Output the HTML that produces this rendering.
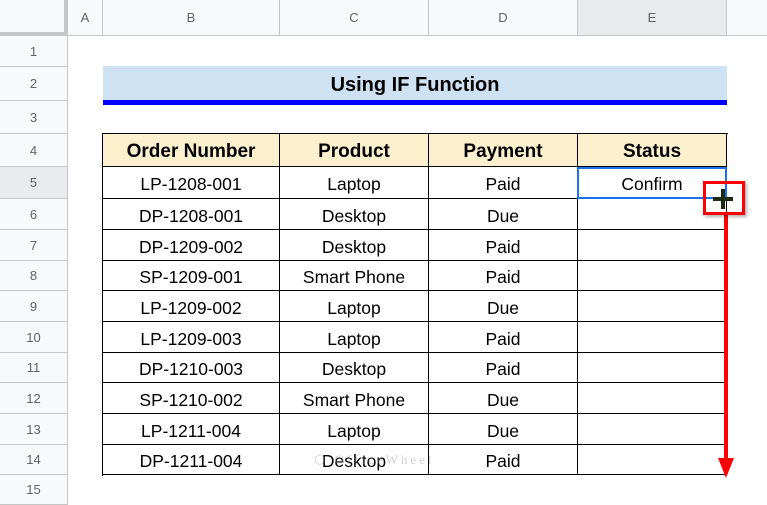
<!DOCTYPE html>
<html><head><style>
*{margin:0;padding:0;box-sizing:border-box}
body{width:767px;height:505px;overflow:hidden;background:#fff;position:relative;font-family:"Liberation Sans",Arial,sans-serif}
.a{position:absolute}
.ch{position:absolute;top:0;height:36px;background:#f8f9fa;border-right:1px solid #c4c7c5;border-bottom:1px solid #c4c7c5;color:#5f6368;font-size:13px;display:flex;align-items:center;justify-content:center}
.rh{position:absolute;left:0;width:68px;background:#f8f9fa;border-right:1px solid #c4c7c5;border-bottom:1px solid #c4c7c5;color:#5f6368;font-size:13px;display:flex;align-items:center;justify-content:center}
.c{position:absolute;border-right:1px solid #000;border-bottom:1px solid #000;display:flex;align-items:center;justify-content:center;font-size:17.5px;color:#000;padding-top:4px}
.h{background:#fdf0cf;font-weight:bold;font-size:19px}
</style></head><body>
<div class="ch" style="left:0;width:68px;border-right:4px solid #c4c7c5;border-bottom:4px solid #c4c7c5"></div>
<div class="ch" style="left:68px;width:35px">A</div>
<div class="ch" style="left:103px;width:177px">B</div>
<div class="ch" style="left:280px;width:149px">C</div>
<div class="ch" style="left:429px;width:149px">D</div>
<div class="ch" style="left:578px;width:149px;background:#e8eaed">E</div>
<div class="ch" style="left:727px;width:40px;border-right:none"></div>
<div class="rh" style="top:36px;height:31px">1</div>
<div class="rh" style="top:67px;height:34px">2</div>
<div class="rh" style="top:101px;height:33px">3</div>
<div class="rh" style="top:134px;height:33px">4</div>
<div class="rh" style="top:167px;height:32px;background:#e8eaed">5</div>
<div class="rh" style="top:199px;height:31px">6</div>
<div class="rh" style="top:230px;height:31px">7</div>
<div class="rh" style="top:261px;height:30px">8</div>
<div class="rh" style="top:291px;height:31px">9</div>
<div class="rh" style="top:322px;height:31px">10</div>
<div class="rh" style="top:353px;height:30px">11</div>
<div class="rh" style="top:383px;height:31px">12</div>
<div class="rh" style="top:414px;height:31px">13</div>
<div class="rh" style="top:445px;height:30px">14</div>
<div class="rh" style="top:475px;height:30px">15</div>

<div class="a" style="left:103px;top:66px;width:624px;height:35px;background:#cfe2f3;font-weight:bold;font-size:20px;display:flex;align-items:center;justify-content:center;padding-top:3px">Using IF Function</div>
<div class="a" style="left:103px;top:100px;width:624px;height:5px;background:#0000ff"></div>

<div class="a" style="left:102px;top:133px;width:626px;height:343px;border-left:1px solid #000;border-top:1px solid #000"></div>
<div id="t"></div>
<script>
var rows=[["Order Number","Product","Payment","Status"],
["LP-1208-001","Laptop","Paid","Confirm"],["DP-1208-001","Desktop","Due",""],["DP-1209-002","Desktop","Paid",""],
["SP-1209-001","Smart Phone","Paid",""],["LP-1209-002","Laptop","Due",""],["LP-1209-003","Laptop","Paid",""],
["DP-1210-003","Desktop","Paid",""],["SP-1210-002","Smart Phone","Due",""],["LP-1211-004","Laptop","Due",""],["DP-1211-004","Desktop","Paid",""]];
var tops=[134,167,199,230,261,291,322,353,383,414,445,475];
var xs=[103,280,429,578,727];var h="";
for(var r=0;r<rows.length;r++)for(var c=0;c<4;c++){
h+='<div class="c'+(r==0?' h':'')+'" style="left:'+xs[c]+'px;top:'+tops[r]+'px;width:'+(xs[c+1]-xs[c])+'px;height:'+(tops[r+1]-tops[r])+'px">'+rows[r][c]+'</div>';}
document.getElementById('t').outerHTML=h;
</script>
<div class="a" style="left:577px;top:167px;width:150px;height:32px;border:2px solid #1a73e8"></div>
<div class="a" style="left:314px;top:452px;color:rgba(150,150,150,.45);font-size:13px;letter-spacing:3px;font-family:'Liberation Serif',serif">⬡ OfficeWheel</div>
<div class="a" style="left:724px;top:214px;width:4px;height:246px;background:#f00"></div>
<svg class="a" style="left:715px;top:456px" width="22" height="24"><polygon points="3,2 19,2 11,22" fill="#f00"/></svg>
<div class="a" style="left:703px;top:181px;width:42px;height:34px;border:3px solid #f00;box-shadow:2px 2px 3px rgba(0,0,0,.3)"></div>
<div class="a" style="left:713px;top:197px;width:20px;height:4px;background:#1c2a10"></div>
<div class="a" style="left:721px;top:189px;width:4px;height:20px;background:#1c2a10"></div>
</body></html>
